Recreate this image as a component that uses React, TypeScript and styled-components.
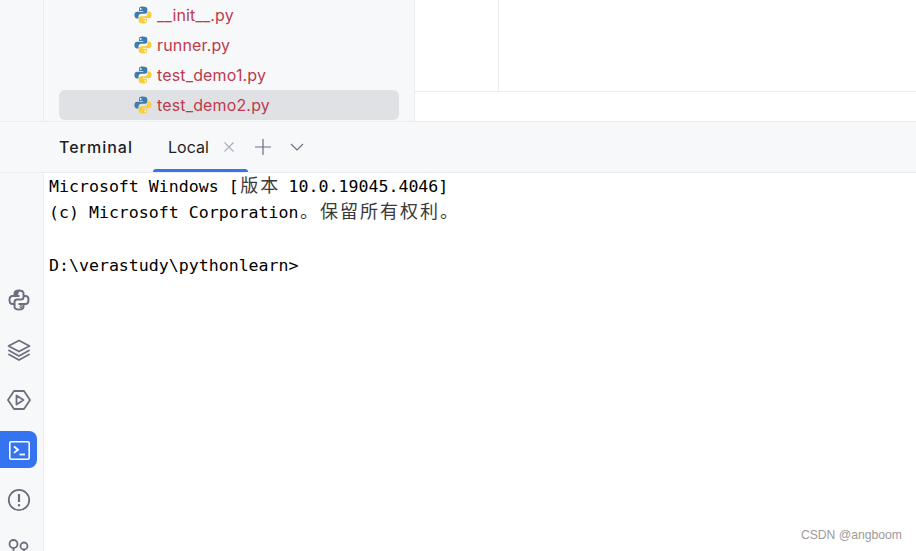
import { FC } from 'react';
import styled, { createGlobalStyle } from 'styled-components';

const GlobalStyle = createGlobalStyle`
  html, body {
    margin: 0;
    height: 100%;
    overflow: hidden;
    background: #ffffff;
  }
  #root {
    height: 100%;
  }
`;

const PythonIcon: FC = () => (
  <svg width="18" height="18" viewBox="0 0 18 18">
    <path
      d="M8.8 0.5C5.6 0.5 5 1.8 5 3v2h4.2v0.8H3.2C1.5 5.8 0.4 7 0.4 9.1c0 2.200 1 3.500 2.600 3.500h1.500v-2c0-1.600 1.300-2.800 2.900-2.800h3.700c1.200 0 2.200-1 2.200-2.300V3c0-1.300-1.200-2.500-4.500-2.500z"
      fill="#3f7cad"
    />
    <path
      d="M9.200 17.500c3.200 0 3.800-1.300 3.800-2.500v-2H8.800v-.8h6c1.700 0 2.800-1.200 2.800-3.300 0-2.200-1-3.500-2.600-3.500h-1.500v2c0 1.600-1.300 2.800-2.900 2.800H6.900c-1.200 0-2.200 1-2.200 2.300V15c0 1.300 1.200 2.500 4.500 2.500z"
      fill="#f7cf3d"
    />
    <circle cx="6.700" cy="2.900" r="0.900" fill="#ffffff" />
    <circle cx="11.300" cy="15.100" r="0.900" fill="#ffffff" />
  </svg>
);

const files = ['__init__.py', 'runner.py', 'test_demo1.py', 'test_demo2.py'];

const App: FC = () => {
  return (
    <>
      <GlobalStyle />
      <Window>
        <Sidebar>
          <RailButton>
            <svg width="24" height="24" viewBox="0 0 24 24" fill="none" stroke="#6c707e" strokeWidth="2" strokeLinejoin="round">
              <path d="M12 2.500c-3 0-4.500 1-4.500 3v2.500h5M7.500 8H5.500c-2 0-3 1.500-3 4s1 4 3 4h2v-2c0-1.500 1-2.500 2.500-2.500h4c1.500 0 2.500-1 2.500-2.500V5.500c0-2-1.500-3-4.500-3z" />
              <path d="M12 21.500c3 0 4.500-1 4.500-3V16h-5M16.500 8h2c2 0 3 1.500 3 4s-1 4-3 4h-2M7.500 16v2.500c0 2 1.500 3 4.500 3" />
              <circle cx="10" cy="5.500" r="0.500" />
              <circle cx="14" cy="18.500" r="0.500" />
            </svg>
          </RailButton>
          <RailButton>
            <svg width="24" height="24" viewBox="0 0 24 24" fill="none" stroke="#6c707e" strokeWidth="1.800" strokeLinejoin="round" strokeLinecap="round">
              <path d="M12 2.500 22.500 8 12 13.500 1.500 8z" />
              <path d="M2 12.500 12 18l10-5.500" />
              <path d="M2 16.500 12 22l10-5.500" />
            </svg>
          </RailButton>
          <RailButton>
            <svg width="24" height="24" viewBox="0 0 24 24" fill="none" stroke="#6c707e" strokeWidth="1.800" strokeLinejoin="round">
              <path d="M7 3h10l6 9-6 9H7l-6-9z" />
              <path d="M9.500 7.500 16.500 12l-7 4.500z" />
            </svg>
          </RailButton>
          <RailButton $active>
            <svg width="24" height="24" viewBox="0 0 24 24" fill="none" stroke="#ffffff" strokeWidth="1.600">
              <rect x="2.800" y="3.800" width="19.400" height="17.400" rx="1.500" />
              <path d="M7 8.500l4 3.200-4 3.200" strokeWidth="1.800" />
              <path d="M12.500 16.500h5.500" strokeWidth="1.800" />
            </svg>
          </RailButton>
          <RailButton>
            <svg width="24" height="24" viewBox="0 0 24 24" fill="none" stroke="#6c707e" strokeWidth="1.800">
              <circle cx="12" cy="12" r="10.200" />
              <path d="M12 6v8" strokeWidth="2.200" />
              <circle cx="12" cy="17.300" r="0.700" strokeWidth="1.200" fill="#6c707e" />
            </svg>
          </RailButton>
          <RailButton>
            <svg width="24" height="24" viewBox="0 0 24 24" fill="none" stroke="#6c707e" strokeWidth="1.800">
              <circle cx="6.500" cy="6" r="4" />
              <circle cx="17" cy="8" r="3.500" />
              <path d="M6.500 10v11M17 11.500v6" />
            </svg>
          </RailButton>
        </Sidebar>
        <Main>
          <TopArea>
            <ProjectPanel>
              {files.map((name, i) => (
                <FileRow key={name} $selected={i === 3}>
                  <PythonIcon />
                  <FileName>{name}</FileName>
                </FileRow>
              ))}
            </ProjectPanel>
            <EditorArea>
              <EditorTop>
                <EditorGutter />
              </EditorTop>
            </EditorArea>
          </TopArea>
          <TerminalHeader>
            <TerminalTitle>Terminal</TerminalTitle>
            <LocalTab>
              <TabLabel>Local</TabLabel>
              <svg width="12" height="12" viewBox="0 0 12 12" stroke="#a8adbd" strokeWidth="1.100">
                <path d="M1.500 1.500l9 9M10.500 1.500l-9 9" />
              </svg>
            </LocalTab>
            <PlusIcon width="18" height="18" viewBox="0 0 18 18" stroke="#6c707e" strokeWidth="1.200">
              <path d="M9 1v16M1 9h16" />
            </PlusIcon>
            <ChevronIcon width="14" height="14" viewBox="0 0 14 14" fill="none" stroke="#6c707e" strokeWidth="1.200">
              <path d="M1 4l6 6 6-6" />
            </ChevronIcon>
          </TerminalHeader>
          <TerminalBody>
            <TermLine>
              Microsoft Windows [<Cjk>版本</Cjk> 10.0.19045.4046]
            </TermLine>
            <TermLine>
              (c) Microsoft Corporation<Cjk>。保留所有权利。</Cjk>
            </TermLine>
            <TermLine />
            <TermLine>D:\verastudy\pythonlearn&gt;</TermLine>
          </TerminalBody>
        </Main>
        <Watermark>CSDN @angboom</Watermark>
      </Window>
    </>
  );
};

export default App;

const Window = styled.div`
  position: relative;
  display: flex;
  width: 916px;
  height: 551px;
  overflow: hidden;
  background: #ffffff;
`;

const Sidebar = styled.div`
  flex: none;
  box-sizing: border-box;
  width: 44px;
  height: 551px;
  padding: 281px 0 0 0;
  display: flex;
  flex-direction: column;
  row-gap: 13px;
  background: #f7f8fa;
  border-right: 1px solid #ebecf0;
`;

const RailButton = styled.div<{ $active?: boolean }>`
  flex: none;
  width: 37px;
  height: 37px;
  display: flex;
  align-items: center;
  justify-content: center;
  border-radius: 0 8px 8px 0;
  background: ${(p) => (p.$active ? '#3574f0' : 'transparent')};
`;

const Main = styled.div`
  flex: 1;
  min-width: 0;
  display: flex;
  flex-direction: column;
`;

const TopArea = styled.div`
  flex: none;
  height: 121px;
  display: flex;
`;

const ProjectPanel = styled.div`
  flex: none;
  box-sizing: border-box;
  width: 371px;
  height: 121px;
  padding-left: 15px;
  padding-right: 15px;
  background: #f7f8fa;
  border-right: 1px solid #ebecf0;
`;

const FileRow = styled.div<{ $selected?: boolean }>`
  height: 30px;
  display: flex;
  align-items: center;
  column-gap: 5px;
  padding-left: 75px;
  border-radius: 6px;
  background: ${(p) => (p.$selected ? '#dfe1e5' : 'transparent')};
`;

const FileName = styled.span`
  font-family: Inter, 'Liberation Sans', sans-serif;
  font-size: 16px;
  letter-spacing: 0.15px;
  color: #bc3b4c;
`;

const EditorArea = styled.div`
  flex: 1;
  min-width: 0;
`;

const EditorTop = styled.div`
  height: 92px;
  box-sizing: border-box;
  border-bottom: 1px solid #ebecf0;
`;

const EditorGutter = styled.div`
  box-sizing: border-box;
  width: 84px;
  height: 91px;
  border-right: 1px solid #ebecf0;
`;

const TerminalHeader = styled.div`
  flex: none;
  box-sizing: border-box;
  height: 52px;
  margin-left: -44px;
  padding-left: 59px;
  display: flex;
  align-items: center;
  background: #f7f8fa;
  border-top: 1px solid #ebecf0;
  border-bottom: 1px solid #ebecf0;
`;

const TerminalTitle = styled.span`
  width: 94px;
  font-family: Inter, 'Liberation Sans', sans-serif;
  font-size: 16px;
  font-weight: 500;
  letter-spacing: 1px;
  color: #1e1f22;
`;

const LocalTab = styled.div`
  position: relative;
  box-sizing: border-box;
  width: 95px;
  height: 50px;
  padding-left: 15px;
  display: flex;
  align-items: center;
  column-gap: 14px;

  &::after {
    content: '';
    position: absolute;
    left: 0;
    right: 0;
    bottom: 0;
    height: 3px;
    border-radius: 3px 3px 0 0;
    background: #3574f0;
  }
`;

const TabLabel = styled.span`
  font-family: Inter, 'Liberation Sans', sans-serif;
  font-size: 16px;
  color: #1e1f22;
`;

const PlusIcon = styled.svg`
  margin-left: 6px;
`;

const ChevronIcon = styled.svg`
  margin-left: 18px;
`;

const TerminalBody = styled.div`
  flex: 1;
  padding: 1px 0 0 5px;
  background: #ffffff;
`;

const TermLine = styled.div`
  height: 26.400px;
  line-height: 26.400px;
  white-space: pre;
  font-family: 'DejaVu Sans Mono', 'Liberation Mono', monospace;
  font-size: 16.580px;
  color: #000000;
`;

const Cjk = styled.span`
  font-family: 'Noto Sans CJK SC', sans-serif;
  font-size: 18px;
  line-height: 1;
  letter-spacing: 2px;
  margin-left: 1.500px;
  margin-right: -1.500px;
  color: #3a3a3a;
`;

const Watermark = styled.div`
  position: absolute;
  right: 14px;
  bottom: 9px;
  font-family: 'Liberation Sans', sans-serif;
  font-size: 12.200px;
  color: #9b9b9b;
`;
